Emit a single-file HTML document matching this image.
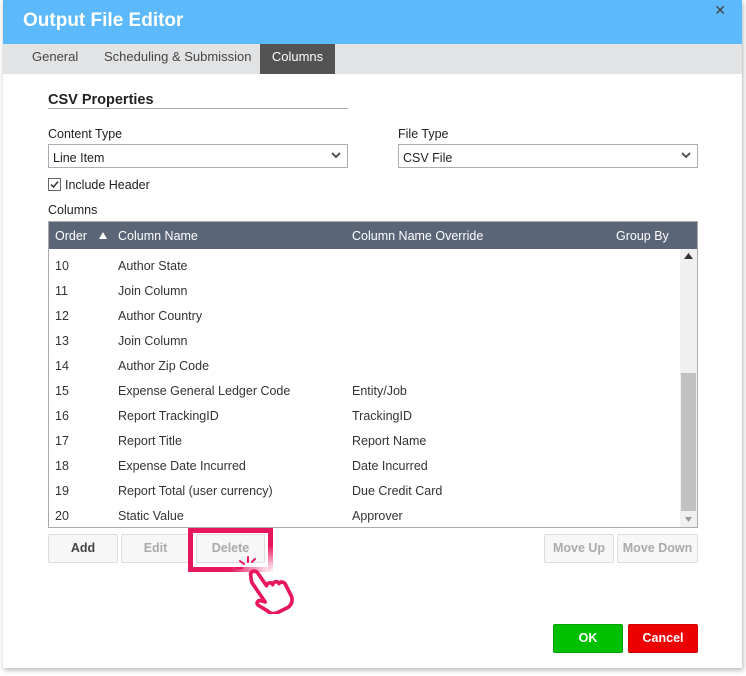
<!DOCTYPE html>
<html><head><meta charset="utf-8"><style>
*{box-sizing:border-box;margin:0;padding:0}
body{width:746px;height:676px;background:#fff;font-family:"Liberation Sans",sans-serif;color:#333;position:relative;overflow:hidden}
.dlg{position:absolute;left:3px;top:0;width:739px;height:668px;background:#fff;box-shadow:1px 2px 5px rgba(0,0,0,.3)}
.title{position:absolute;left:0;top:0;width:739px;height:44px;background:#5bb9fc;color:#fff;font-weight:bold;font-size:19px;padding:10px 0 0 20px}
.x{position:absolute;right:16px;top:2px;color:#444;font-size:14px;font-weight:normal}
.tabs{position:absolute;left:0;top:44px;width:739px;height:30px;background:#e2e3e5;font-size:13px;color:#444}
.tabs span{position:absolute;top:0;height:30px;line-height:26px}
.a{position:absolute}
.lbl{font-size:12.5px;color:#222}
.sel{position:absolute;height:24px;border:1px solid #a8adb3;font-size:12.5px;padding:6px 0 0 4px;color:#222}
.sel svg{position:absolute;right:6px;top:7px}
.tbl{position:absolute;left:48px;top:221px;width:650px;height:307px;border:1px solid #aaa}
.hd{height:27px;background:#5a6577;color:#fff;font-size:12.5px;position:relative}
.hd span,.r span{position:absolute}
.r{height:25px;position:relative;font-size:12.5px;color:#333}
.r span{top:6px}
.btn{position:absolute;height:29px;border:1px solid #ddd;background:#f7f7f7;border-radius:2px;font-size:12.5px;font-weight:bold;text-align:center;line-height:27px;color:#aaa}
</style></head><body>
<div class="dlg">
<div class="title">Output File Editor<span class="x">✕</span></div>
<div class="tabs"><span style="left:29px">General</span><span style="left:101px">Scheduling &amp; Submission</span><span style="left:257px;width:75px;background:#535353;color:#fff;text-align:center">Columns</span></div>
</div>
<div class="a" style="left:48px;top:92px;font-size:14.5px;font-weight:bold;color:#222">CSV Properties</div>
<div class="a" style="left:48px;top:108px;width:300px;height:1px;background:#aaa"></div>
<div class="a lbl" style="left:48px;top:127px">Content Type</div>
<div class="a lbl" style="left:398px;top:127px">File Type</div>
<div class="sel" style="left:48px;top:144px;width:300px">Line Item<svg width="10" height="7"><path d="M1 1l4 4 4-4" stroke="#555" stroke-width="2" fill="none"/></svg></div>
<div class="sel" style="left:398px;top:144px;width:300px">CSV File<svg width="10" height="7"><path d="M1 1l4 4 4-4" stroke="#555" stroke-width="2" fill="none"/></svg></div>
<div class="a" style="left:48px;top:178px;width:13px;height:13px;border:1px solid #666"><svg width="11" height="11" style="position:absolute;left:0;top:0"><path d="M2 5.5l2.5 2.5 4.5-5.5" stroke="#333" stroke-width="1.5" fill="none"/></svg></div>
<div class="a lbl" style="left:65px;top:178px">Include Header</div>
<div class="a lbl" style="left:48px;top:203px">Columns</div>
<div class="tbl">
<div class="hd"><span style="left:6px;top:7px">Order</span><svg style="position:absolute;left:50px;top:10px" width="8" height="7"><path d="M4 0L8 7H0z" fill="#fff"/></svg><span style="left:69px;top:7px">Column Name</span><span style="left:303px;top:7px">Column Name Override</span><span style="left:567px;top:7px">Group By</span></div>
<div style="height:4px"></div>
<div class="r"><span style="left:6px">10</span><span style="left:69px">Author State</span></div>
<div class="r"><span style="left:6px">11</span><span style="left:69px">Join Column</span></div>
<div class="r"><span style="left:6px">12</span><span style="left:69px">Author Country</span></div>
<div class="r"><span style="left:6px">13</span><span style="left:69px">Join Column</span></div>
<div class="r"><span style="left:6px">14</span><span style="left:69px">Author Zip Code</span></div>
<div class="r"><span style="left:6px">15</span><span style="left:69px">Expense General Ledger Code</span><span style="left:303px">Entity/Job</span></div>
<div class="r"><span style="left:6px">16</span><span style="left:69px">Report TrackingID</span><span style="left:303px">TrackingID</span></div>
<div class="r"><span style="left:6px">17</span><span style="left:69px">Report Title</span><span style="left:303px">Report Name</span></div>
<div class="r"><span style="left:6px">18</span><span style="left:69px">Expense Date Incurred</span><span style="left:303px">Date Incurred</span></div>
<div class="r"><span style="left:6px">19</span><span style="left:69px">Report Total (user currency)</span><span style="left:303px">Due Credit Card</span></div>
<div class="r"><span style="left:6px">20</span><span style="left:69px">Static Value</span><span style="left:303px">Approver</span></div>
<div style="position:absolute;left:631px;top:27px;width:17px;height:278px;background:#f0f0f0"><svg style="position:absolute;left:4px;top:4px" width="9" height="6"><path d="M4.5 0L9 6H0z" fill="#333"/></svg><div style="position:absolute;left:1px;top:124px;width:15px;height:138px;background:#c1c1c1"></div><svg style="position:absolute;left:5px;top:268px" width="7" height="5"><path d="M0 0h7L3.5 5z" fill="#999"/></svg></div>
</div>
<div class="btn" style="left:48px;top:534px;width:70px;color:#444">Add</div>
<div class="btn" style="left:121px;top:534px;width:69px">Edit</div>
<div class="btn" style="left:196px;top:534px;width:69px">Delete</div>
<div class="btn" style="left:544px;top:534px;width:70px">Move Up</div>
<div class="btn" style="left:617px;top:534px;width:81px">Move Down</div>
<div class="btn" style="left:553px;top:624px;width:70px;background:#00c000;border-color:#00a000;color:#fff">OK</div>
<div class="btn" style="left:628px;top:624px;width:70px;background:#ee0000;border-color:#c00;color:#fff">Cancel</div>
<div class="a" style="left:188px;top:528px;width:85px;height:44px;border:5px solid #e8175d;border-right-color:transparent;border-bottom-color:transparent"></div>
<div class="a" style="left:268px;top:528px;width:5px;height:44px;background:linear-gradient(#e8175d 40%,rgba(232,23,93,0))"></div>
<div class="a" style="left:188px;top:567px;width:85px;height:5px;background:linear-gradient(90deg,#e8175d 50%,rgba(232,23,93,0))"></div>
<svg class="a" style="left:234px;top:556px" width="64" height="58" viewBox="0 0 64 58">
<g stroke="#e8175d" stroke-width="2" fill="none" stroke-linecap="round">
<path d="M14 1v5M6 5l4 3M3 12h5M21 3l-3 3"/>
</g>
<g transform="translate(2,2) rotate(-10 20 16) scale(1.05)">
<path d="M14 14c2-3 6-2 7 1l6 13c1-3 5-3 6 0 1-3 5-3 6 0 2-2 5-1 6 2l3 10c2 5 0 10-5 12l-10 3c-4 1-7 0-9-3l-8-7c-2-2 0-5 3-4l4 2-9-20c-1-3 0-6 0-9z" fill="#fff" stroke="#e8175d" stroke-width="3.5" stroke-linejoin="round"/>
</g>
</svg>
</body></html>
